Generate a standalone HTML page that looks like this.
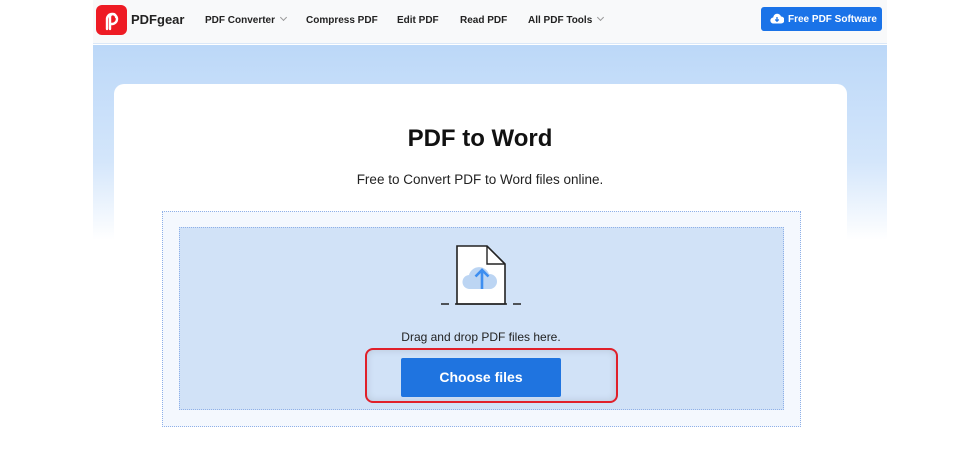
<!DOCTYPE html>
<html><head><meta charset="utf-8"><style>
*{margin:0;padding:0;box-sizing:border-box}
body{width:980px;height:450px;background:#fff;font-family:"Liberation Sans",Arial,sans-serif;position:relative;overflow:hidden}
.hdr{position:absolute;left:93px;top:0;width:794px;height:44px;background:#f8f9fa;border-bottom:1px solid #dbe8f8}
.logo{position:absolute;left:96px;top:5px;width:31px;height:30px;background:#ee1b24;border-radius:6px}
.brand{position:absolute;left:131px;top:12px;font-size:13px;font-weight:bold;color:#222}
.nav{position:absolute;top:15px;font-size:10px;font-weight:bold;color:#222}
.chev{display:inline-block;width:5px;height:5px;border-right:1px solid #999;border-bottom:1px solid #999;transform:rotate(45deg);margin-left:6px;position:relative;top:-3px}
.fbtn{position:absolute;left:761px;top:7px;width:121px;height:24px;background:#1a73e8;border-radius:3px;color:#fff;font-size:10px;font-weight:bold;padding:7px 0 0 27px}
.bg{position:absolute;left:93px;top:45px;width:794px;height:195px;background:linear-gradient(#bcd8f8 0%,#d4e6fb 60%,#fff 100%)}
.card{position:absolute;left:114px;top:84px;width:733px;height:380px;background:#fff;border-radius:10px}
h1{position:absolute;left:0;width:960px;top:125px;text-align:center;font-size:24px;font-weight:bold;color:#111}
.sub{position:absolute;left:0;width:960px;top:172px;text-align:center;font-size:13.5px;color:#222}
.outer{position:absolute;left:162px;top:211px;width:639px;height:216px;background:#f4f8fe;border:1px dotted #8fb0e8}
.inner{position:absolute;left:179px;top:227px;width:605px;height:183px;background:#d1e2f7;border:1px dotted #8fb0e8}
.drag{position:absolute;left:0;width:962px;top:330px;text-align:center;font-size:12px;color:#222}
.red{position:absolute;left:365px;top:348px;width:253px;height:55px;border:2px solid #e0202a;border-radius:8px;box-shadow:0 0 8px rgba(0,0,0,.12) inset}
.btn{position:absolute;left:401px;top:358px;width:160px;height:39px;background:#1f74e0;border-radius:2px;color:#fff;font-size:14px;font-weight:bold;text-align:center;line-height:39px}
</style></head><body>
<div class="hdr"></div>
<div class="logo"><svg width="31" height="30" viewBox="0 0 31 30"><path d="M11 24V14a5 5 0 0 1 10 0a5 5 0 0 1-5 5h-2M14 24V12a3 3 0 0 1 6 0" fill="none" stroke="#fff" stroke-width="2.4" stroke-linecap="round"/></svg></div>
<div class="brand">PDFgear</div>
<div class="nav" style="left:205px">PDF Converter<span class="chev"></span></div>
<div class="nav" style="left:306px">Compress PDF</div>
<div class="nav" style="left:397px">Edit PDF</div>
<div class="nav" style="left:460px">Read PDF</div>
<div class="nav" style="left:528px">All PDF Tools<span class="chev"></span></div>
<div class="fbtn"><svg style="position:absolute;left:9px;top:6px" width="14" height="11" viewBox="0 0 14 11"><path d="M3.5 10.5a3 3 0 0 1-.3-6A4 4 0 0 1 11 3.5a3.5 3.5 0 0 1 0 7z" fill="#fff"/><path d="M7 4v4M5.3 6.5L7 8.2 8.7 6.5" stroke="#1a73e8" stroke-width="1.3" fill="none"/></svg>Free PDF Software</div>
<div class="bg"></div>
<div class="card"></div>
<h1>PDF to Word</h1>
<div class="sub">Free to Convert PDF to Word files online.</div>
<div class="outer"></div>
<div class="inner"></div>
<svg style="position:absolute;left:440px;top:244px" width="82" height="62" viewBox="0 0 82 62">
<path d="M17 60V2h30l18 18v40z" fill="#fff" stroke="#222" stroke-width="1.6"/>
<path d="M47 2v18h18" fill="none" stroke="#222" stroke-width="1.4"/>
<path d="M30 45a7 7 0 0 1-1-14a10.5 10.5 0 0 1 20-1a7.5 7.5 0 0 1 1 15z" fill="#bcd5f3"/>
<path d="M42 45V26M35.5 32.5L42 26l6.5 6.5" fill="none" stroke="#3d8ef0" stroke-width="2.6"/>
<path d="M1 60h8M15 60h52M73 60h8" stroke="#222" stroke-width="1.6"/>
</svg>
<div class="drag">Drag and drop PDF files here.</div>
<div class="red"></div>
<div class="btn">Choose files</div>
</body></html>
